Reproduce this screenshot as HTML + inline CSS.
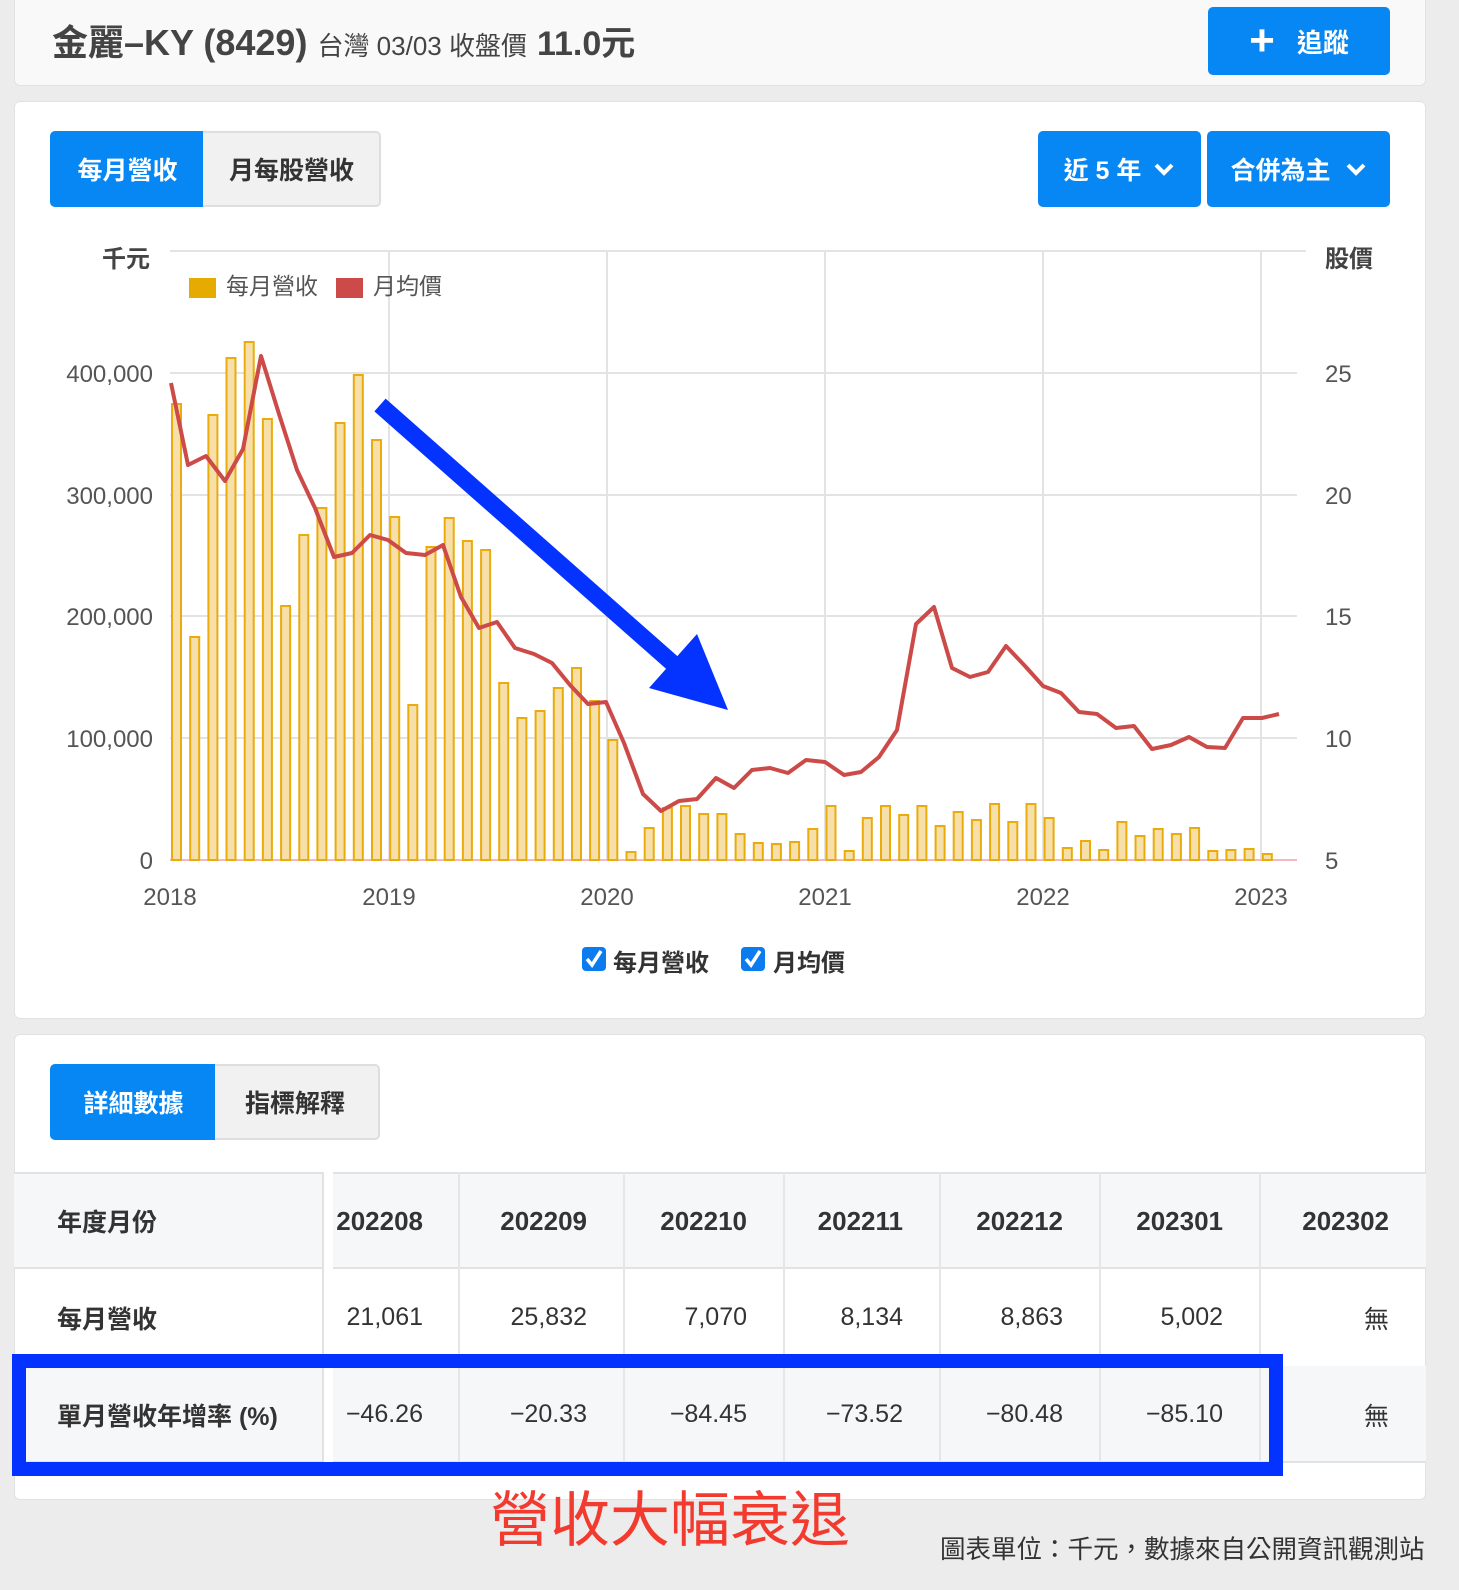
<!DOCTYPE html>
<html><head><meta charset="utf-8">
<style>
*{margin:0;padding:0;box-sizing:border-box}
body{width:1459px;height:1590px;background:#ececec;font-family:"Liberation Sans","Noto Sans CJK TC",sans-serif;position:relative;overflow:hidden;color:#333}
.card{position:absolute;left:14px;width:1412px;background:#fff;border:1px solid #e2e2e2;border-radius:6px}
.abs{position:absolute}
.btn{position:absolute;background:#0787f4;color:#fff;border-radius:5px;font-weight:bold;font-size:25px;display:flex;align-items:center;justify-content:center}
.tab2{position:absolute;background:#f1f1f1;border:2px solid #dedede;border-radius:5px;font-weight:bold;font-size:25px;color:#333;display:flex;align-items:center}
.cell{position:absolute;font-size:25px;color:#333;display:flex;align-items:center}
</style></head><body>

<!-- header card -->
<div class="card" style="top:-6px;height:92px;background:#f9f9f9"></div>
<div class="abs" style="left:52px;top:14px;font-size:36px;font-weight:bold;color:#444;white-space:nowrap">金麗–KY (8429) <span style="font-size:26px;font-weight:normal">台灣 03/03 收盤價</span> <span style="font-size:34px">11.0元</span></div>
<div class="btn" style="left:1208px;top:7px;width:182px;height:68px;font-size:26px"><span style="font-size:44px;font-weight:bold;margin-right:22px;line-height:1">+</span>追蹤</div>

<!-- chart card -->
<div class="card" style="top:101px;height:918px"></div>
<div class="btn" style="left:50px;top:131px;width:155px;height:76px;border-radius:5px 0 0 5px">每月營收</div>
<div class="tab2" style="left:203px;top:131px;width:178px;height:76px;border-left:none;border-radius:0 5px 5px 0;padding-left:26px">月每股營收</div>
<div class="btn" style="left:1038px;top:131px;width:163px;height:76px">近 5 年 <svg width="22" height="14" style="margin-left:12px" viewBox="0 0 22 14"><path d="M3 3 L11 11 L19 3" stroke="#fff" stroke-width="4" fill="none"/></svg></div>
<div class="btn" style="left:1207px;top:131px;width:183px;height:76px">合併為主 <svg width="22" height="14" style="margin-left:14px" viewBox="0 0 22 14"><path d="M3 3 L11 11 L19 3" stroke="#fff" stroke-width="4" fill="none"/></svg></div>

<svg class="abs" style="left:0;top:0" width="1459" height="1020" viewBox="0 0 1459 1020">
<g stroke="#e3e3e3" stroke-width="2">
<line x1="170" y1="251" x2="1297" y2="251"/>
<line x1="170" y1="373" x2="1297" y2="373"/>
<line x1="170" y1="495" x2="1297" y2="495"/>
<line x1="170" y1="616" x2="1297" y2="616"/>
<line x1="170" y1="738" x2="1297" y2="738"/>
<line x1="389" y1="251" x2="389" y2="860"/>
<line x1="607" y1="251" x2="607" y2="860"/>
<line x1="825" y1="251" x2="825" y2="860"/>
<line x1="1043" y1="251" x2="1043" y2="860"/>
<line x1="1261" y1="251" x2="1261" y2="860"/>
<line x1="1297" y1="251" x2="1306" y2="251"/>
</g>
<line x1="170" y1="860" x2="1297" y2="860" stroke="#f3b9c0" stroke-width="2"/>
<g fill="#f7dfa9" stroke="#eaac0c" stroke-width="2">
<rect x="172" y="404" width="9" height="456"/>
<rect x="190.2" y="637" width="9" height="223"/>
<rect x="208.4" y="415" width="9" height="445"/>
<rect x="226.5" y="358" width="9" height="502"/>
<rect x="244.7" y="342" width="9" height="518"/>
<rect x="262.9" y="419" width="9" height="441"/>
<rect x="281.1" y="606" width="9" height="254"/>
<rect x="299.3" y="535" width="9" height="325"/>
<rect x="317.4" y="508" width="9" height="352"/>
<rect x="335.6" y="423" width="9" height="437"/>
<rect x="353.8" y="375" width="9" height="485"/>
<rect x="372" y="440" width="9" height="420"/>
<rect x="390.2" y="517" width="9" height="343"/>
<rect x="408.3" y="705" width="9" height="155"/>
<rect x="426.5" y="547" width="9" height="313"/>
<rect x="444.7" y="518" width="9" height="342"/>
<rect x="462.9" y="541" width="9" height="319"/>
<rect x="481.1" y="550" width="9" height="310"/>
<rect x="499.2" y="683" width="9" height="177"/>
<rect x="517.4" y="718" width="9" height="142"/>
<rect x="535.6" y="711" width="9" height="149"/>
<rect x="553.8" y="688" width="9" height="172"/>
<rect x="572" y="668" width="9" height="192"/>
<rect x="590.1" y="701" width="9" height="159"/>
<rect x="608.3" y="740" width="9" height="120"/>
<rect x="626.5" y="852" width="9" height="8"/>
<rect x="644.7" y="828" width="9" height="32"/>
<rect x="662.9" y="808" width="9" height="52"/>
<rect x="681" y="806" width="9" height="54"/>
<rect x="699.2" y="814" width="9" height="46"/>
<rect x="717.4" y="814" width="9" height="46"/>
<rect x="735.6" y="834" width="9" height="26"/>
<rect x="753.8" y="843" width="9" height="17"/>
<rect x="771.9" y="844" width="9" height="16"/>
<rect x="790.1" y="842" width="9" height="18"/>
<rect x="808.3" y="829" width="9" height="31"/>
<rect x="826.5" y="806" width="9" height="54"/>
<rect x="844.7" y="851" width="9" height="9"/>
<rect x="862.8" y="818" width="9" height="42"/>
<rect x="881" y="806" width="9" height="54"/>
<rect x="899.2" y="815" width="9" height="45"/>
<rect x="917.4" y="806" width="9" height="54"/>
<rect x="935.6" y="826" width="9" height="34"/>
<rect x="953.7" y="812" width="9" height="48"/>
<rect x="971.9" y="820" width="9" height="40"/>
<rect x="990.1" y="804" width="9" height="56"/>
<rect x="1008.3" y="822" width="9" height="38"/>
<rect x="1026.5" y="804" width="9" height="56"/>
<rect x="1044.6" y="818" width="9" height="42"/>
<rect x="1062.8" y="848" width="9" height="12"/>
<rect x="1081" y="841" width="9" height="19"/>
<rect x="1099.2" y="850" width="9" height="10"/>
<rect x="1117.4" y="822" width="9" height="38"/>
<rect x="1135.5" y="836" width="9" height="24"/>
<rect x="1153.7" y="829" width="9" height="31"/>
<rect x="1171.9" y="834" width="9" height="26"/>
<rect x="1190.1" y="828" width="9" height="32"/>
<rect x="1208.3" y="851" width="9" height="9"/>
<rect x="1226.4" y="850" width="9" height="10"/>
<rect x="1244.6" y="849" width="9" height="11"/>
<rect x="1262.8" y="854" width="9" height="6"/>
</g>
<polyline fill="none" stroke="#cc4a48" stroke-width="4" stroke-linejoin="round" points="171,383 188,465 206,456 225,481 243,449 261,356 279,414 297,470 315,508 334,557 352,553 370,535 388,540 406,553 425,555 443,545 461,597 479,628 497,622 515,648 534,654 552,663 570,685 588,704 606,702 624,743 643,794 661,811 679,801 697,799 716,778 734,788 752,770 770,768 788,773 806,760 825,762 844,775 861,772 879,757 897,730 916,624 934,607 952,668 970,677 988,672 1006,646 1025,666 1043,686 1061,693 1079,712 1097,714 1116,728 1134,726 1152,749 1171,745 1189,737 1207,747 1225,748 1243,718 1262,718 1279,714"/>
<line x1="380" y1="405" x2="678" y2="668" stroke="#0433ff" stroke-width="17"/>
<polygon points="697,634 649,688 728,710" fill="#0433ff"/>
<g font-size="24" fill="#555" font-family="Liberation Sans, sans-serif">
<text x="153" y="382" text-anchor="end">400,000</text>
<text x="153" y="504" text-anchor="end">300,000</text>
<text x="153" y="625" text-anchor="end">200,000</text>
<text x="153" y="747" text-anchor="end">100,000</text>
<text x="153" y="869" text-anchor="end">0</text>
<text x="1325" y="382">25</text>
<text x="1325" y="504">20</text>
<text x="1325" y="625">15</text>
<text x="1325" y="747">10</text>
<text x="1325" y="869">5</text>
<g text-anchor="middle">
<text x="170" y="905">2018</text><text x="389" y="905">2019</text><text x="607" y="905">2020</text><text x="825" y="905">2021</text><text x="1043" y="905">2022</text><text x="1261" y="905">2023</text>
</g>
</g>
<g font-family="Liberation Sans, Noto Sans CJK TC, sans-serif">
<text x="102" y="267" font-size="24" font-weight="bold" fill="#444">千元</text>
<text x="1325" y="267" font-size="24" font-weight="bold" fill="#444">股價</text>
<rect x="189" y="278" width="27" height="20" fill="#e6ab00"/>
<text x="226" y="294" font-size="23" fill="#555">每月營收</text>
<rect x="336" y="278" width="27" height="20" fill="#cc4a48"/>
<text x="373" y="294" font-size="23" fill="#555">月均價</text>
<rect x="582" y="947" width="24" height="24" rx="4" fill="#0b7cf0"/>
<path d="M587 959 L592 965 L601 951" stroke="#fff" stroke-width="3.5" fill="none"/>
<text x="613" y="971" font-size="24" font-weight="bold" fill="#333">每月營收</text>
<rect x="741" y="947" width="24" height="24" rx="4" fill="#0b7cf0"/>
<path d="M746 959 L751 965 L760 951" stroke="#fff" stroke-width="3.5" fill="none"/>
<text x="773" y="971" font-size="24" font-weight="bold" fill="#333">月均價</text>
</g>
</svg>

<!-- table card -->
<div class="card" style="top:1034px;height:466px"></div>
<div class="btn" style="left:50px;top:1064px;width:167px;height:76px;border-radius:5px 0 0 5px">詳細數據</div>
<div class="tab2" style="left:215px;top:1064px;width:165px;height:76px;border-left:none;border-radius:0 5px 5px 0;padding-left:30px">指標解釋</div>

<!-- rows -->
<div class="abs" style="left:14px;top:1172px;width:1412px;height:97px;background:#f6f7f9;border-top:2px solid #e2e2e2;border-bottom:2px solid #e2e2e2"></div>
<div class="abs" style="left:14px;top:1366px;width:1412px;height:97px;background:#f6f7f9;border-bottom:2px solid #e2e2e2"></div>
<div class="abs" style="left:323px;top:1172px;width:10px;height:291px;background:#fff"></div>
<div class="abs" style="left:322px;top:1172px;width:2px;height:291px;background:#e2e2e2"></div>
<div class="abs" style="left:458px;top:1172px;width:2px;height:291px;background:#e6e6e6"></div>
<div class="abs" style="left:623px;top:1172px;width:2px;height:291px;background:#e6e6e6"></div>
<div class="abs" style="left:783px;top:1172px;width:2px;height:291px;background:#e6e6e6"></div>
<div class="abs" style="left:939px;top:1172px;width:2px;height:291px;background:#e6e6e6"></div>
<div class="abs" style="left:1099px;top:1172px;width:2px;height:291px;background:#e6e6e6"></div>
<div class="abs" style="left:1259px;top:1172px;width:2px;height:291px;background:#e6e6e6"></div>

<div class="cell" style="left:57px;top:1174px;height:94px;font-weight:bold">年度月份</div>
<div class="cell" style="left:57px;top:1270px;height:95px;font-weight:bold">每月營收</div>
<div class="cell" style="left:57px;top:1366px;height:97px;font-weight:bold">單月營收年增率 (%)</div>

<div class="cell" style="left:333px;top:1174px;height:94px;width:90px;justify-content:flex-end;font-weight:bold;font-size:26px">202208</div>
<div class="cell" style="left:460px;top:1174px;height:94px;width:127px;justify-content:flex-end;font-weight:bold;font-size:26px">202209</div>
<div class="cell" style="left:625px;top:1174px;height:94px;width:122px;justify-content:flex-end;font-weight:bold;font-size:26px">202210</div>
<div class="cell" style="left:785px;top:1174px;height:94px;width:118px;justify-content:flex-end;font-weight:bold;font-size:26px">202211</div>
<div class="cell" style="left:941px;top:1174px;height:94px;width:122px;justify-content:flex-end;font-weight:bold;font-size:26px">202212</div>
<div class="cell" style="left:1101px;top:1174px;height:94px;width:122px;justify-content:flex-end;font-weight:bold;font-size:26px">202301</div>
<div class="cell" style="left:1261px;top:1174px;height:94px;width:128px;justify-content:flex-end;font-weight:bold;font-size:26px">202302</div>

<div class="cell" style="left:333px;top:1270px;height:95px;width:90px;justify-content:flex-end">21,061</div>
<div class="cell" style="left:460px;top:1270px;height:95px;width:127px;justify-content:flex-end">25,832</div>
<div class="cell" style="left:625px;top:1270px;height:95px;width:122px;justify-content:flex-end">7,070</div>
<div class="cell" style="left:785px;top:1270px;height:95px;width:118px;justify-content:flex-end">8,134</div>
<div class="cell" style="left:941px;top:1270px;height:95px;width:122px;justify-content:flex-end">8,863</div>
<div class="cell" style="left:1101px;top:1270px;height:95px;width:122px;justify-content:flex-end">5,002</div>
<div class="cell" style="left:1261px;top:1270px;height:95px;width:128px;justify-content:flex-end">無</div>

<div class="cell" style="left:333px;top:1366px;height:97px;width:90px;justify-content:flex-end">−46.26</div>
<div class="cell" style="left:460px;top:1366px;height:97px;width:127px;justify-content:flex-end">−20.33</div>
<div class="cell" style="left:625px;top:1366px;height:97px;width:122px;justify-content:flex-end">−84.45</div>
<div class="cell" style="left:785px;top:1366px;height:97px;width:118px;justify-content:flex-end">−73.52</div>
<div class="cell" style="left:941px;top:1366px;height:97px;width:122px;justify-content:flex-end">−80.48</div>
<div class="cell" style="left:1101px;top:1366px;height:97px;width:122px;justify-content:flex-end">−85.10</div>
<div class="cell" style="left:1261px;top:1366px;height:97px;width:128px;justify-content:flex-end">無</div>

<!-- blue highlight box -->
<div class="abs" style="left:12px;top:1354px;width:1271px;height:122px;border:14px solid #0433ff"></div>

<div class="abs" style="left:490px;top:1488px;font-size:60px;color:#f23a2f;white-space:nowrap;line-height:1.1">營收大幅衰退</div>
<div class="abs" style="left:940px;top:1529px;font-size:25.5px;color:#333;white-space:nowrap">圖表單位：千元，數據來自公開資訊觀測站</div>
</body></html>
